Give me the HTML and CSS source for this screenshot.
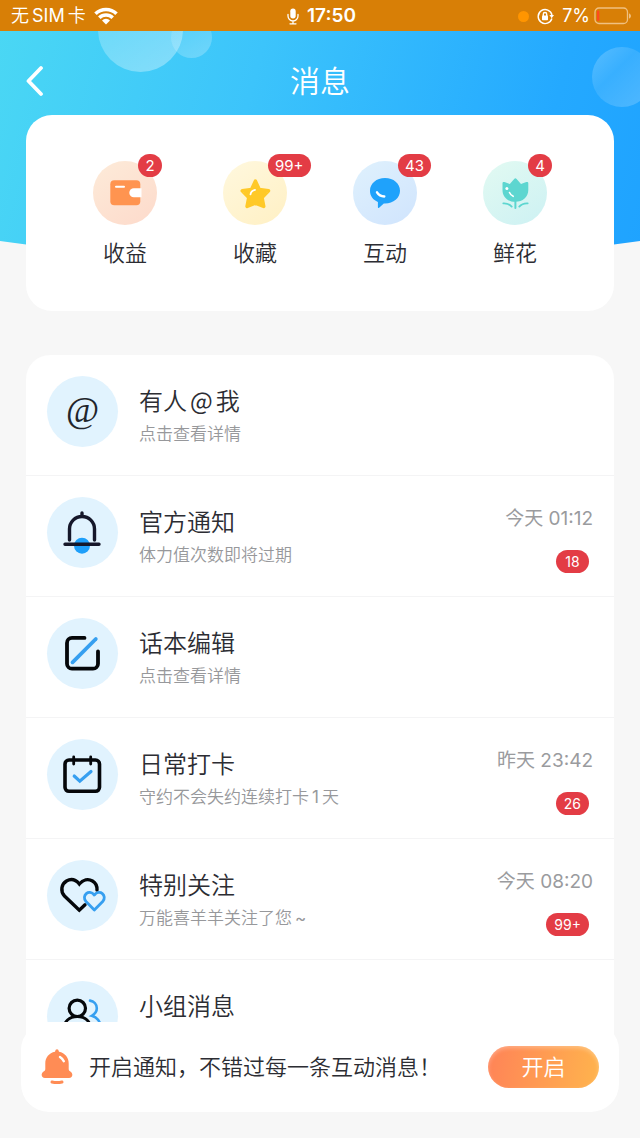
FILE: index.html
```html
<!DOCTYPE html>
<html lang="zh-CN">
<head>
<meta charset="utf-8">
<meta name="viewport" content="width=device-width, initial-scale=1">
<title>消息</title>
<link rel="stylesheet" href="styles.css">
</head>
<body>
<div class="app">
  <div class="status">
    <div class="status-side">
      <span>无<span class="latin">SIM</span>卡</span>
      <svg width="24" height="18" viewBox="0 0 24 18" fill="none" stroke="#fff" stroke-width="3.600">
        <path d="M1.500 6.800a15 15 0 0 1 21 0"/>
        <path d="M5.300 10.700a9.600 9.600 0 0 1 13.400 0"/>
        <path d="M12 17.600l-4-4.100a5.600 5.600 0 0 1 8 0z" fill="#fff" stroke="none"/>
      </svg>
    </div>
    <div class="status-time">
      <svg width="12" height="17" viewBox="0 0 12 17" fill="none" stroke="#fff" stroke-width="1.300" stroke-linecap="round">
        <rect x="3.300" y="0.500" width="5.400" height="10" rx="2.700" fill="#fff" stroke="none"/>
        <path d="M1 6.500v1.500a5 5 0 0 0 10 0V6.500M6 13v2.600M3 15.800h6"/>
      </svg>
      <span>17:50</span>
    </div>
    <div class="status-side status-right">
      <i class="dot"></i>
      <svg width="17" height="17" viewBox="0 0 17 17" fill="none" stroke="#fff" stroke-width="1.400">
        <path d="M14.900 10.500A7 7 0 1 1 15 7"/>
        <path d="M12.400 7h4.600l-2.300 3.300z" fill="#fff" stroke="none"/>
        <rect x="5" y="7.600" width="6" height="4.600" rx=".8" fill="#fff" stroke="none"/>
        <path d="M6.300 8V6.200a1.700 1.700 0 0 1 3.400 0V8"/>
      </svg>
      <span class="charge">7%
        <svg width="38" height="18" viewBox="0 0 38 18" fill="none">
          <rect x="1" y="1" width="32.500" height="15.500" rx="4" stroke="#f0c080" stroke-width="1.300"/>
          <rect x="3" y="3.500" width="2.300" height="10.500" rx="1" fill="#ff4a1c"/>
          <path d="M35 6.500c2.600.6 2.600 4.400 0 5z" fill="#f0c080"/>
        </svg>
      </span>
    </div>
  </div>

  <main class="page">
    <div class="hero" aria-hidden="true">
      <i class="bubble bubble-big"></i>
      <i class="bubble bubble-small"></i>
      <i class="bubble bubble-right"></i>
    </div>

    <header class="nav">
      <button class="back" type="button" aria-label="返回">
        <svg width="18" height="32" viewBox="0 0 18 32" fill="none" stroke="#fff" stroke-width="3.800" stroke-linecap="round" stroke-linejoin="round"><path d="M15 3 2.500 16l12.500 13"/></svg>
      </button>
      <h1>消息</h1>
    </header>

    <nav class="shortcuts">
      <a class="shortcut" href="#income">
        <span class="disc disc-orange">
          <svg viewBox="0 0 64 64" fill="none" stroke-linecap="round">
            <rect x="17.300" y="19.300" width="30" height="25" rx="4" fill="#ff9450"/>
            <path d="M48.500 27.300H40.800a4.500 4.500 0 0 0 0 9h7.700z" fill="#fff"/>
            <path d="M23 25.700h8" stroke="#fff" stroke-width="2"/>
          </svg>
          <b class="badge">2</b>
        </span>
        <span>收益</span>
      </a>
      <a class="shortcut" href="#favorites">
        <span class="disc disc-yellow">
          <svg viewBox="0 0 64 64" fill="none" stroke-linecap="round" stroke-linejoin="round">
            <path d="M32.400 20.200l3.800 8.300 9.300 1.300-6.500 6.700 1.700 8.900-8.300-3.400-8.300 3.400 1.700-8.900-6.500-6.700 9.300-1.300z" fill="#ffc928" stroke="#ffc928" stroke-width="3.600"/>
            <path d="M27.500 33.300c.4-2.300 2-4 4.500-4.500" stroke="#fff" stroke-width="1.800"/>
          </svg>
          <b class="badge">99+</b>
        </span>
        <span>收藏</span>
      </a>
      <a class="shortcut" href="#interact">
        <span class="disc disc-blue">
          <svg viewBox="0 0 64 64" fill="none" stroke-linecap="round">
            <path d="M32 17c8.500 0 15 5.500 15 12.700S40.500 42.400 32 42.400l-1.200 0-4.700 4.300c-.6.500-1.200.2-1.200-.5v-5.300C20 38.900 17 34.900 17 29.700 17 22.500 23.500 17 32 17z" fill="#1fa2fb"/>
            <path d="M24 31.300c1.700 2.700 4 4 7.300 4.200" stroke="#fff" stroke-width="2.400"/>
          </svg>
          <b class="badge">43</b>
        </span>
        <span>互动</span>
      </a>
      <a class="shortcut" href="#flowers">
        <span class="disc disc-teal">
          <svg viewBox="0 0 64 64" fill="none" stroke-linecap="round" stroke-linejoin="round">
            <path d="M19.500 22.300c0-1.300 1-1.600 2-1.200l5.300 2 4.400-5.200c.8-.8 1.600-.8 2.400 0l4.400 5.200 5.300-2c1-.4 2-.1 2 1.200V29c0 7-5.500 11.800-13 11.800S19.500 36 19.500 29z" fill="#5dd6d0"/>
            <path d="M32.400 39v8" stroke="#5dd6d0" stroke-width="2"/>
            <path d="M20.300 42.300c3.600-.2 6.300.8 8.400 3.300M44.700 42.300c-3.600-.2-6.300.8-8.400 3.300" stroke="#5dd6d0" stroke-width="1.800"/>
            <path d="M26.500 31.500c.8 1.900 2 3 3.700 3.800" stroke="#fff" stroke-width="1.600"/>
            <circle cx="23.900" cy="27.500" r="1.500" fill="#fff"/>
          </svg>
          <b class="badge">4</b>
        </span>
        <span>鲜花</span>
      </a>
    </nav>

    <ul class="list">
      <li class="row">
        <span class="avatar avatar-at" aria-hidden="true">@</span>
        <div class="info"><h2>有人<span class="latin">@</span>我</h2><p>点击查看详情</p></div>
      </li>
      <li class="row">
        <span class="avatar">
          <svg viewBox="0 0 71 71" fill="none" stroke="#15172a" stroke-width="3.400" stroke-linecap="round">
            <circle cx="35" cy="48.700" r="8" fill="#1e9ffa" stroke="none"/>
            <path d="M22.500 43V32a12.500 12.500 0 0 1 25 0v11M35 19.500v-3.500M18 47.300h34"/>
          </svg>
        </span>
        <div class="info"><h2>官方通知</h2><p>体力值次数即将过期</p></div>
        <div class="meta"><time>今天 01:12</time><b class="count">18</b></div>
      </li>
      <li class="row">
        <span class="avatar">
          <svg viewBox="0 0 71 71" fill="none" stroke="#05070a" stroke-width="3.800" stroke-linecap="round">
            <path d="M37.500 19.900H25a5 5 0 0 0-5 5V45.700a5 5 0 0 0 5 5H46a5 5 0 0 0 5-5V33.500"/>
            <path d="M25.500 44.300 48.800 21" stroke="#369ff0"/>
          </svg>
        </span>
        <div class="info"><h2>话本编辑</h2><p>点击查看详情</p></div>
      </li>
      <li class="row">
        <span class="avatar">
          <svg viewBox="0 0 71 71" fill="none" stroke="#05070a" stroke-width="3.600" stroke-linecap="round">
            <rect x="18" y="21" width="34.500" height="31.300" rx="4"/>
            <path d="M26.700 18v7M43.700 18v7" stroke-width="2.800"/>
            <path d="M27.200 37l5.600 5.200L44 32.500" stroke="#369ff0" stroke-width="3.200"/>
          </svg>
        </span>
        <div class="info"><h2>日常打卡</h2><p>守约不会失约连续打卡<span class="latin">1</span>天</p></div>
        <div class="meta"><time>昨天 23:42</time><b class="count">26</b></div>
      </li>
      <li class="row">
        <span class="avatar">
          <svg viewBox="0 0 71 71" fill="none" stroke="#05070a" stroke-width="3.400" stroke-linecap="round">
            <path d="M38 44.800 32.300 50.200 17.500 36C13 31 14.500 24 19.500 21c4.500-2.500 9-1.500 12.800 3 3.800-4.500 9-5.500 13.200-3 3.300 2 4.700 5.300 4.500 9"/>
            <path d="M47.300 50 39 41.500c-5-6 3-13 8.300-6.500 5.300-6.500 13.400.5 8.400 6.500z" stroke="#369ff0" stroke-width="2.800" stroke-linejoin="round"/>
          </svg>
        </span>
        <div class="info"><h2>特别关注</h2><p>万能喜羊羊关注了您<span class="latin">~</span></p></div>
        <div class="meta"><time>今天 08:20</time><b class="count">99+</b></div>
      </li>
      <li class="row">
        <span class="avatar">
          <svg viewBox="0 0 71 71" fill="none" stroke="#05070a" stroke-width="3.200" stroke-linecap="round">
            <circle cx="30.300" cy="27.300" r="8.200"/>
            <path d="M16 49c1-8.500 6.500-13.500 14.300-13.500S43.500 40.500 44.500 49"/>
            <path d="M43 19.600c3.800.6 6.800 3.600 6.800 7.700 0 3.400-2.300 6-5 7.500 5.200 1.600 8.700 6 9.700 12.200" stroke="#369ff0" stroke-width="2.600"/>
          </svg>
        </span>
        <div class="info"><h2>小组消息</h2></div>
      </li>
    </ul>

    <section class="notice">
      <svg class="notice-icon" width="32" height="36" viewBox="0 0 32 36" fill="none" stroke-linecap="round">
        <path d="M16 .3c1 0 1.600.8 2 2.500 6 1.200 9.700 5.700 9.700 11.700v5.300c0 1.500.5 2 1.700 2.700 3 1.800 2.500 6.500-1.400 6.500H4c-3.900 0-4.400-4.700-1.400-6.500 1.200-.7 1.700-1.200 1.700-2.700v-5.300C4.300 8.500 8 4 14 2.800c.4-1.700 1-2.500 2-2.500z" fill="#ff8c55"/>
        <path d="M11 33c3.500.8 6.500.8 10 0" stroke="#ff8c55" stroke-width="3"/>
        <path d="M19 8c1.800 1.100 3 2.400 3.800 4.200" stroke="#fff" stroke-width="2.400"/>
      </svg>
      <p>开启通知，不错过每一条互动消息！</p>
      <button class="enable" type="button">开启</button>
    </section>
  </main>
</div>
</body>
</html>
```
FILE: styles.css
```css
* {
  box-sizing: border-box;
}

body,
h1,
h2,
p,
ul {
  margin: 0;
  padding: 0;
  font-weight: 350;
}

body {
  background: #f7f7f7;
  color: #2c2d33;
  font-family: Inter, "Noto Sans CJK SC", sans-serif;
}

button {
  border: 0;
  padding: 0;
  background: none;
  color: inherit;
  font: inherit;
}

svg {
  display: block;
}

/* western glyphs set between Chinese characters */
.latin {
  padding: 0 3px;
  font-weight: 400;
}

.app {
  display: flex;
  flex-direction: column;
  height: 100vh;
}

/* status bar */
.status {
  display: grid;
  grid-template-columns: 1fr auto 1fr;
  align-items: center;
  height: 31px;
  padding: 0 8px 0 11px;
  background: #d87f06;
  color: #fff;
  font-size: 18px;
  line-height: 32px;
}

.status-side,
.status-time {
  display: flex;
  align-items: center;
  gap: 8px;
}

.status-time {
  font-size: 19px;
  font-weight: 600;
}

.charge {
  display: flex;
  align-items: center;
  gap: 4px;
  font-weight: 400;
}

.status-right {
  justify-content: flex-end;
}

.dot {
  width: 11px;
  height: 11px;
  border-radius: 50%;
  background: #ff9500;
}

/* page */
.page {
  position: relative;
  display: flex;
  flex: 1;
  flex-direction: column;
  min-height: 0;
  padding-bottom: 26px;
}

.hero {
  position: absolute;
  inset: 0 0 auto;
  height: 231px;
  overflow: hidden;
  background: linear-gradient(105deg, #4ad7f4 0%, #3cc4fb 38%, #24a9ff 82%, #1fa3ff 100%);
  clip-path: ellipse(120% 100% at 50% 0);
}

.bubble {
  position: absolute;
  border-radius: 50%;
}

.bubble-big {
  top: -44px;
  left: 98px;
  width: 85px;
  height: 85px;
  background: linear-gradient(150deg, rgba(255, 255, 255, .15), rgba(255, 255, 255, .36));
}

.bubble-small {
  top: -14px;
  left: 171px;
  width: 41px;
  height: 41px;
  background: linear-gradient(150deg, rgba(255, 255, 255, .08), rgba(255, 255, 255, .26));
}

.bubble-right {
  top: 16px;
  right: -12px;
  width: 60px;
  height: 60px;
  background: linear-gradient(135deg, rgba(255, 255, 255, .24), rgba(255, 255, 255, .1) 40%, rgba(255, 255, 255, .22));
}

.nav {
  position: relative;
  display: grid;
  grid-template-columns: 1fr auto 1fr;
  align-items: center;
  height: 84px;
  padding: 16px 26px 0;
  color: #fff;
}

.nav h1 {
  font-size: 30px;
  line-height: 40px;
}

.back {
  justify-self: start;
}

.shortcuts {
  position: relative;
  display: grid;
  grid-template-columns: repeat(4, 1fr);
  margin: 0 26px;
  padding: 46px 34px 40px;
  border-radius: 26px;
  background: #fff;
}

.shortcut {
  display: flex;
  flex-direction: column;
  align-items: center;
  gap: 10px;
  color: #2c2d33;
  font-size: 22px;
  line-height: 36px;
  text-decoration: none;
}

.disc {
  position: relative;
  width: 64px;
  height: 64px;
  border-radius: 50%;
}

.disc-orange {
  background: linear-gradient(145deg, #fdebd9, #fddacb);
}

.disc-yellow {
  background: linear-gradient(145deg, #fff8de, #fff0c4);
}

.disc-blue {
  background: linear-gradient(145deg, #dff1fd, #d0e4fd);
}

.disc-teal {
  background: linear-gradient(145deg, #e2faf2, #cdf1f3);
}

.badge,
.count {
  height: 23px;
  border-radius: 12px;
  background: #e33c45;
  color: #fff;
  font-weight: 400;
  line-height: 23px;
  text-align: center;
}

.badge {
  position: absolute;
  top: -7px;
  left: 45px;
  min-width: 24px;
  padding: 0 7px;
  font-size: 15px;
}

/* message list */
.list {
  flex: 1;
  min-height: 0;
  margin: 44px 26px 0;
  overflow-y: auto;
  border-radius: 24px 24px 0 0;
  background: #fff;
  list-style: none;
  scrollbar-width: none;
}

.row {
  display: flex;
  min-height: 121px;
  padding: 21px 21px 0;
  border-bottom: 1px solid #f4f4f5;
}

.avatar {
  flex: none;
  width: 71px;
  height: 71px;
  margin-right: 21px;
  border-radius: 50%;
  background: #e1f3fe;
}

.avatar-at {
  color: #22252c;
  font-family: "Liberation Serif", serif;
  font-size: 36px;
  line-height: 68px;
  text-align: center;
}

.info {
  flex: 1;
}

.info h2 {
  padding: 5px 0 1px;
  font-family: "Noto Sans CJK SC", sans-serif;
  font-size: 24px;
  line-height: 38px;
}

.info p {
  color: #97989b;
  font-size: 17px;
  line-height: 28px;
}

.meta {
  display: flex;
  flex-direction: column;
  align-items: flex-end;
  gap: 17px;
  padding-top: 8px;
}

.meta time {
  color: #9a9b9e;
  font-size: 19px;
  font-weight: 400;
  line-height: 28px;
}

.count {
  min-width: 33px;
  margin-right: 4px;
  padding: 0 8px;
  font-size: 14px;
}

/* notification prompt, laid over the end of the list */
.notice {
  position: relative;
  display: flex;
  align-items: center;
  height: 90px;
  margin: -30px 21px 0;
  padding: 0 20px;
  border-radius: 28px;
  background: #fff;
}

.notice-icon {
  flex: none;
  margin-right: 16px;
}

.notice p {
  flex: 1;
  font-size: 22px;
  line-height: 32px;
  white-space: nowrap;
}

.enable {
  width: 111px;
  height: 42px;
  border-radius: 21px;
  background: linear-gradient(100deg, #ff8357, #ffb44d);
  box-shadow: inset 0 2px 4px rgba(255, 255, 255, .3);
  color: #fff;
  font-size: 22px;
  line-height: 40px;
}
```
